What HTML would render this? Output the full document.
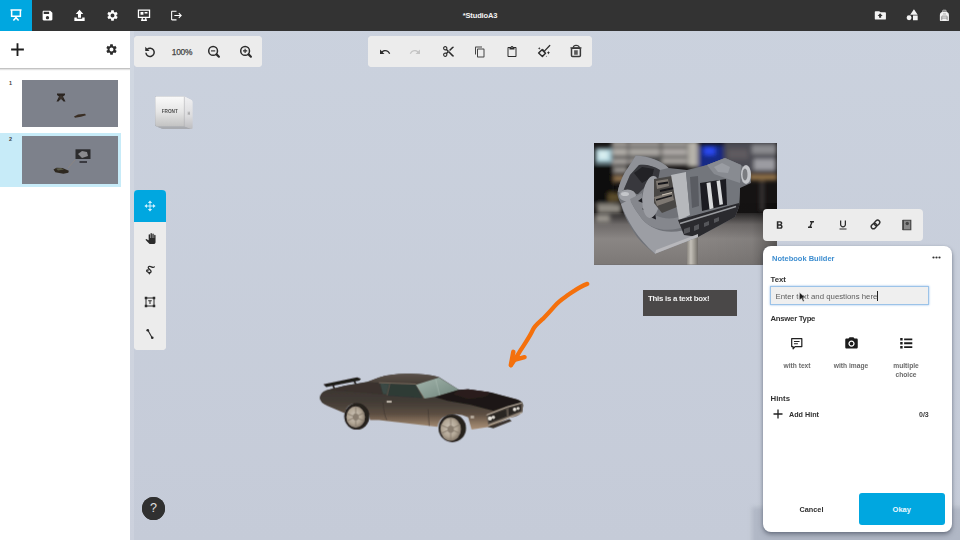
<!DOCTYPE html>
<html><head><meta charset="utf-8">
<style>
*{box-sizing:border-box;margin:0;padding:0}
html,body{width:960px;height:540px;overflow:hidden;background:#c9d0dd;font-family:"Liberation Sans",sans-serif;}
#app{position:absolute;left:0;top:0;width:960px;height:540px;background:linear-gradient(180deg,#cbd2de 0%,#c5cbd8 100%)}
#in{position:absolute;left:0;top:0;width:960px;height:540px;filter:blur(.45px)}
.bl{position:absolute}
.abs{position:absolute}
#topbar{position:absolute;left:0;top:0;width:972px;height:31px;background:#333333}
#tab{position:absolute;left:0;top:0;width:32px;height:31px;background:#00a7e0}
#title{position:absolute;left:0;width:960px;top:11px;text-align:center;color:#f4f4f4;font-size:7.500px;font-weight:bold;letter-spacing:-0.150px}
#side{position:absolute;left:0;top:31px;width:130px;height:521px;background:#fff;overflow:hidden}
#sidehead{position:absolute;left:-12px;top:0;width:154px;height:37px;background:#fff;box-shadow:0 1px 2px rgba(0,0,0,0.35)}
.thumb{position:absolute;left:22px;width:96px;height:48px;background:#7d818b}
#sel{position:absolute;left:-12px;top:102px;width:133px;height:54px;background:#c7ebf8}
.num{position:absolute;left:9px;font-size:5.500px;color:#444;font-weight:bold}
.tb{position:absolute;background:#ececec;border-radius:4px}
svg{position:absolute;overflow:visible}
.ic{position:absolute;width:12px;height:12px}
.ic svg{left:0;top:0;width:100%;height:100%}
.lbl{font-size:7.800px;font-weight:bold;color:#333;white-space:nowrap}
.sm{font-size:7.100px;font-weight:bold;color:#6a6a6a;text-align:center;line-height:8.900px;transform:scaleX(.94)}
.w{fill:#fff}
.d{fill:#2b2b2b}
</style></head><body>
<div id="app"><div id="in">
 <div class="bl" style="left:-12px;top:-12px;width:984px;height:24px;background:#333"></div>
 <div class="bl" style="left:-12px;top:-12px;width:44px;height:24px;background:#00a7e0"></div>
 <div class="bl" style="left:-12px;top:31px;width:24px;height:521px;background:#fff"></div>
 <div class="bl" style="left:-12px;top:520px;width:142px;height:32px;background:#fff"></div>
 <div class="bl" style="left:-12px;top:133px;width:24px;height:54px;background:#c7ebf8"></div>
 <div class="bl" style="left:130px;top:31px;width:4px;height:521px;background:rgba(255,255,255,.13)"></div>
<!--TOPBAR-->
 <div id="topbar"><div id="tab"></div><div id="title">*StudioA3</div>
  <!-- presentation -->
  <svg style="left:9px;top:8px;width:14px;height:14px" viewBox="0 0 24 24"><path fill="none" stroke="#fff" stroke-width="2.6" d="M2.500 3.500h19M4.500 3.500v10.500h15V3.500M12 14v3M12 16.500l-4.500 5M12 16.500l4.500 5"/></svg>
  <svg style="left:41px;top:9px;width:13px;height:13px" viewBox="0 0 24 24"><path class="w" d="M17 3H5c-1.110 0-2 .900-2 2v14c0 1.100.890 2 2 2h14c1.100 0 2-.900 2-2V7l-4-4zm-5 16c-1.660 0-3-1.340-3-3s1.340-3 3-3 3 1.340 3 3-1.340 3-3 3zm3-10H5V5h10v4z"/></svg>
  <!-- upload -->
  <svg style="left:73px;top:9px;width:13px;height:13px" viewBox="0 0 24 24"><path class="w" d="M12 1.500l-7 7.500h4.200v7h5.600V9H19zM2.500 15.500h4.500v2.500h10v-2.500h4.500v6.500h-19z"/></svg>
  <svg style="left:105.500px;top:9px;width:13px;height:13px" viewBox="0 0 24 24"><path class="w" d="M19.140 12.940c.040-.300.060-.610.060-.940 0-.320-.020-.640-.070-.940l2.030-1.580c.180-.140.230-.410.120-.610l-1.920-3.320c-.120-.220-.370-.290-.590-.220l-2.390.960c-.500-.380-1.030-.700-1.620-.940l-.360-2.540c-.040-.240-.240-.410-.480-.410h-3.840c-.240 0-.430.170-.470.410l-.360 2.540c-.590.240-1.130.570-1.620.940l-2.390-.960c-.220-.080-.470 0-.590.220L2.740 8.870c-.120.210-.080.470.120.610l2.030 1.580c-.050.300-.090.630-.090.940s.020.640.070.940l-2.030 1.580c-.180.140-.230.410-.120.610l1.920 3.320c.120.220.370.290.590.220l2.390-.960c.500.380 1.030.700 1.620.940l.360 2.540c.050.240.240.410.480.410h3.840c.240 0 .440-.170.470-.410l.360-2.540c.590-.240 1.130-.560 1.620-.940l2.390.960c.220.080.470 0 .590-.220l1.920-3.320c.120-.220.070-.470-.120-.610l-2.010-1.580zM12 15.600c-1.980 0-3.600-1.620-3.600-3.600s1.620-3.600 3.600-3.600 3.600 1.620 3.600 3.600-1.620 3.600-3.600 3.600z"/></svg>
  <!-- monitor -->
  <svg style="left:136.500px;top:8px;width:14px;height:14px" viewBox="0 0 24 24"><path fill="none" stroke="#fff" stroke-width="2.200" d="M2.500 3.500h19v12.500h-19zM7 21h10M9 16.500v4M15 16.500v4"/><path class="w" d="M6 7h5v4.500H6zM13 7h5v2.500h-5z"/></svg>
  <svg style="left:169.500px;top:9px;width:13px;height:13px" viewBox="0 0 24 24"><path class="w" d="M17 7l-1.410 1.410L18.170 11H8v2h10.170l-2.580 2.580L17 17l5-5zM4 5h8V3H4c-1.100 0-2 .900-2 2v14c0 1.100.900 2 2 2h8v-2H4V5z"/></svg>
  <!-- right -->
  <svg style="left:865px;top:3px;width:90px;height:25px" viewBox="0 0 960 267">
   <path fill="#f4f4f4" d="M104 96Q104 87 113 87H150L166 100H214Q223 100 223 109V167Q223 176 214 176H113Q104 176 104 167Z"/>
   <path fill="#333" d="M161 110l27 28h-16v20h-22v-20h-16z"/>
   <path fill="#f4f4f4" d="M522 68l40 58h-80zM512 134h50v50h-50z"/><circle cx="470" cy="158" r="26" fill="#f4f4f4"/>
   <path fill="#f0f0f0" d="M799 184V128Q799 94 847 92Q896 94 896 128V184Q896 191 889 191H806Q799 191 799 184Z"/>
   <path fill="none" stroke="#f0f0f0" stroke-width="8" d="M829 94V84Q829 77 837 77H858Q866 77 866 84V94"/>
   <path fill="none" stroke="#555" stroke-width="6" d="M819 184V146Q819 140 825 140H871Q877 140 877 146V184M819 161H877"/>
   <path stroke="#777" stroke-width="6" d="M832 117H864"/>
  </svg>
 </div>
<!--SIDEBAR-->
 <div id="side">
   <div id="sel"></div>
   <div class="thumb" style="top:48.500px;left:21.500px;height:47.500px"></div>
   <div class="thumb" style="top:104.500px;left:21.500px;height:48.500px"></div>
   <svg style="left:0;top:0;width:130px;height:200px;filter:blur(.5px)" viewBox="0 31 130 200">
    <path d="M57 93.500h8v1.500l-2 1.500 2.500 5h-2l-2.500-3-2.500 3h-2l2.500-5-2-1.500z" fill="#2a2420"/><circle cx="61" cy="97.500" r="2" fill="#3a322c"/>
    <path d="M74 116.500l4-2 7-.8 1 1.500-5 1.500-6 1z" fill="#3a2e24"/>
    <rect x="75.500" y="149.300" width="15" height="9.700" fill="#2c2c2e"/><path d="M78 154l4-3 5 1 1 4-6 2z" fill="#8a8a8e"/>
    <rect x="79.500" y="161" width="7.500" height="2" fill="#3a3a40"/>
    <path d="M75 160l-7 8" stroke="#9a8878" stroke-width=".5"/>
    <path d="M53.500 169.500l3-1.800 6 .2 6.300 2.800-.5 2-5 1-8-1.500z" fill="#2e2820"/><path d="M56 168.500l5-.5 3 1.500-6 1z" fill="#5a5a48"/>
   </svg>
   <div class="num" style="top:49px">1</div>
   <div class="num" style="top:105px">2</div>
   <div id="sidehead">
    <svg style="left:21px;top:9.500px;width:17px;height:17px" viewBox="0 0 24 24"><path fill="#1e1e1e" d="M21 13.300h-7.700V21h-2.600v-7.700H3v-2.600h7.700V3h2.600v7.700H21z"/></svg>
    <svg style="left:117px;top:11.500px;width:13px;height:13px" viewBox="0 0 24 24"><path fill="#2b2b2b" d="M19.140 12.940c.040-.300.060-.610.060-.940 0-.320-.020-.640-.070-.940l2.030-1.580c.180-.140.230-.410.120-.610l-1.920-3.320c-.120-.220-.370-.290-.590-.220l-2.390.960c-.500-.380-1.030-.700-1.620-.940l-.360-2.540c-.040-.240-.240-.410-.480-.410h-3.840c-.240 0-.430.170-.470.410l-.360 2.540c-.590.240-1.130.570-1.620.940l-2.390-.960c-.220-.080-.470 0-.590.220L2.740 8.870c-.120.210-.080.470.120.610l2.030 1.580c-.050.300-.090.630-.090.940s.020.640.070.940l-2.030 1.580c-.180.140-.230.410-.120.610l1.920 3.320c.120.220.370.290.590.220l2.390-.960c.500.380 1.030.700 1.620.940l.360 2.540c.050.240.240.410.480.410h3.840c.240 0 .440-.170.470-.410l.360-2.540c.590-.240 1.130-.560 1.620-.940l2.390.960c.220.080.470 0 .590-.220l1.920-3.320c.120-.220.070-.470-.120-.610l-2.010-1.580zM12 15.600c-1.980 0-3.600-1.620-3.600-3.600s1.620-3.600 3.600-3.600 3.600 1.620 3.600 3.600-1.620 3.600-3.600 3.600z"/></svg>
   </div>
 </div>
<!--ZOOMTB-->
 <div class="tb" id="zoomtb" style="left:134px;top:35.500px;width:128px;height:31.500px">
  <svg style="left:10px;top:10.200px;width:12px;height:12px" viewBox="0 0 24 24"><path fill="none" stroke="#2b2b2b" stroke-width="2.900" d="M6.200 6.800A8.300 8.300 0 1 1 3.800 13.500"/><path class="d" d="M2.500 1.500v8.500h8.500z"/></svg>
  <div class="abs" style="left:28px;top:11.400px;width:40px;text-align:center;font-size:8.400px;color:#444;letter-spacing:-0.200px;-webkit-text-stroke:.250px #444">100%</div>
  <svg style="left:71px;top:7px;width:17px;height:17px" viewBox="0 0 17 17"><g fill="none" stroke="#2b2b2b" stroke-linecap="round"><circle cx="8.100" cy="7.900" r="4.400" stroke-width="1.500"/><path stroke-width="2.200" d="M11.600 11.400l2.300 2.300"/><path stroke-width="1.100" stroke-linecap="butt" d="M6 7.900h4.200"/></g></svg>
  <svg style="left:102.650px;top:7px;width:17px;height:17px" viewBox="0 0 17 17"><g fill="none" stroke="#2b2b2b" stroke-linecap="round"><circle cx="8.100" cy="7.900" r="4.400" stroke-width="1.500"/><path stroke-width="2.200" d="M11.600 11.400l2.300 2.300"/><path stroke-width="1.100" stroke-linecap="butt" d="M6 7.900h4.200M8.100 5.800v4.200"/></g></svg>
 </div>
<!--EDITTB-->
 <div class="tb" id="edittb" style="left:368px;top:35.500px;width:224px;height:31.500px">
  <svg style="left:11px;top:10.500px;width:12px;height:12px" viewBox="0 0 24 24"><path class="d" d="M12.500 8c-2.650 0-5.050.990-6.900 2.600L2 7v9h9l-3.620-3.620c1.390-1.160 3.160-1.880 5.120-1.880 3.540 0 6.550 2.310 7.600 5.500l2.370-.780C21.080 11.030 17.150 8 12.500 8z"/></svg>
  <svg style="left:41px;top:10.500px;width:12px;height:12px" viewBox="0 0 24 24"><path fill="#c4c4c4" d="M18.400 10.600C16.550 8.990 14.150 8 11.500 8c-4.650 0-8.580 3.030-9.960 7.220L3.900 16c1.050-3.190 4.050-5.500 7.600-5.500 1.950 0 3.730.720 5.120 1.880L13 16h9V7l-3.600 3.600z"/></svg>
  <svg style="left:73.500px;top:9px;width:13px;height:13px" viewBox="0 0 24 24"><path class="d" d="M9.640 7.640c.230-.500.360-1.050.360-1.640 0-2.210-1.790-4-4-4S2 3.790 2 6s1.790 4 4 4c.590 0 1.140-.130 1.640-.360L10 12l-2.360 2.360C7.140 14.130 6.590 14 6 14c-2.210 0-4 1.790-4 4s1.790 4 4 4 4-1.790 4-4c0-.590-.130-1.140-.360-1.640L12 14l7 7h3v-1L9.640 7.640zM6 8c-1.100 0-2-.890-2-2s.900-2 2-2 2 .890 2 2-.900 2-2 2zm0 12c-1.100 0-2-.890-2-2s.900-2 2-2 2 .890 2 2-.900 2-2 2zm6-7.500c-.280 0-.500-.220-.500-.500s.220-.500.500-.500.500.220.500.500-.220.500-.500.500zM19 3l-6 6 2 2 7-7V3z"/></svg>
  <svg style="left:106px;top:10px;width:12px;height:12px" viewBox="0 0 24 24"><path fill="#444" d="M16 1H4c-1.100 0-2 .900-2 2v14h2V3h12V1zm3 4H8c-1.100 0-2 .900-2 2v14c0 1.100.900 2 2 2h11c1.100 0 2-.900 2-2V7c0-1.100-.900-2-2-2zm0 16H8V7h11v14z"/></svg>
  <svg style="left:138px;top:10px;width:12px;height:12px" viewBox="0 0 24 24"><path class="d" d="M19 2h-4.180C14.400.840 13.300 0 12 0c-1.300 0-2.400.840-2.820 2H5c-1.100 0-2 .900-2 2v16c0 1.100.900 2 2 2h14c1.100 0 2-.900 2-2V4c0-1.100-.900-2-2-2zm-7 0c.550 0 1 .450 1 1s-.450 1-1 1-1-.450-1-1 .450-1 1-1zm7 18H5V4h2v3h10V4h2v16z"/></svg>
  <!-- broom -->
  <svg style="left:162px;top:2.500px;width:60px;height:27px" viewBox="0 0 960 432"><g fill="none" stroke="#2e2e2e" stroke-linecap="round" stroke-linejoin="round"><path stroke-width="20" d="M316 120L238 203"/><path stroke-width="24" d="M192 188l56 56-50 52-60-56z"/><path stroke-width="18" d="M236 214l-34-32"/></g><path fill="#2e2e2e" d="M148 143l7 15 15 7-15 7-7 15-7-15-15-7 15-7zM295 208l9 18 18 9-18 9-9 18-9-18-18-9 18-9z"/><circle cx="262" cy="291" r="8" fill="#555"/>
  <g fill="none" stroke="#3a3a3a" stroke-linecap="round" stroke-linejoin="round"><rect x="664" y="162" width="142" height="134" rx="16" stroke-width="24"/><path stroke-width="22" d="M654 158h162"/><path stroke-width="20" d="M694 148q2-32 42-32q46 0 52 32"/></g><rect x="706" y="196" width="58" height="72" fill="#5a5a5a"/></svg>
 </div>
<!--TOOLTB-->
 <div class="tb" id="tooltb" style="left:134px;top:189.500px;width:32px;height:160.500px">
  <div class="abs" style="left:0;top:0;width:32px;height:32px;background:#00a7e0;border-radius:4px 4px 0 0"></div>
  <svg style="left:10px;top:10.300px;width:12px;height:12px" viewBox="0 0 24 24"><path stroke="#d4f2ff" stroke-width="2" fill="none" d="M12 4v16M4 12h16"/><path fill="#d4f2ff" d="M12 .8l4.200 5.200h-8.400zM12 23.200l4.200-5.200h-8.400zM.8 12l5.200-4.200v8.400zM23.200 12l-5.200-4.200v8.400z"/></svg>
  <svg style="left:10.500px;top:43px;width:11px;height:11px" viewBox="0 0 24 24"><path class="d" d="M23 5.500V20c0 2.200-1.800 4-4 4h-7.300c-1.080 0-2.100-.430-2.850-1.190L1 14.830s1.260-1.230 1.300-1.250c.220-.190.490-.290.790-.290.220 0 .420.060.600.160.040.010 4.310 2.460 4.310 2.460V4c0-.830.670-1.500 1.500-1.500S11 3.170 11 4v7h1V1.500c0-.830.670-1.500 1.500-1.500S15 .670 15 1.500V11h1V2.500c0-.830.670-1.500 1.500-1.500s1.500.670 1.500 1.500V11h1V5.500c0-.830.670-1.500 1.500-1.500s1.500.670 1.500 1.500z"/></svg>
  <svg style="left:6px;top:70.500px;width:20px;height:20px" viewBox="0 0 540 540"><path fill="none" stroke="#2b2b2b" stroke-width="35" stroke-linecap="round" stroke-linejoin="round" d="M385 185C360 215 330 195 290 178C250 162 212 175 225 215C236 250 300 270 300 310C300 348 230 345 197 320C160 292 185 262 222 272"/><path fill="#2b2b2b" d="M205 330l50 65 50-70z"/></svg>
  <!-- text box -->
  <svg style="left:10px;top:106px;width:12px;height:12px" viewBox="0 0 24 24"><path fill="none" stroke="#2b2b2b" stroke-width="2" d="M4 4h16v16H4z"/><path class="d" d="M1.500 1.500h5v5h-5zM17.500 1.500h5v5h-5zM1.500 17.500h5v5h-5zM17.500 17.500h5v5h-5zM8.500 8.500h7v2h-2.500v5.500h-2v-5.500H8.500z"/></svg>
  <svg style="left:10px;top:138.500px;width:12px;height:12px" viewBox="0 0 24 24"><path fill="none" stroke="#2b2b2b" stroke-width="2.200" d="M8 5l8 14"/><circle class="d" cx="7.500" cy="4.500" r="2.700"/><circle class="d" cx="16.500" cy="19.500" r="2.700"/></svg>
 </div>
<!--HELP-->
 <div class="abs" style="left:142px;top:497px;width:23px;height:23px;border-radius:50%;background:#303030;color:#e0e0e0;font-size:12.500px;font-weight:normal;text-align:center;line-height:23.500px">?</div>
<!--SCENE-->
<!-- cube -->
 <svg style="left:145px;top:85px;width:60px;height:55px" viewBox="0 0 589 540">
  <defs>
   <linearGradient id="cf" x1="0" y1="0" x2="0" y2="1"><stop offset="0" stop-color="#fafafa"/><stop offset=".5" stop-color="#e6e6e6"/><stop offset="1" stop-color="#c2c2c2"/></linearGradient>
   <linearGradient id="cs" x1="0" y1="0" x2="0" y2="1"><stop offset="0" stop-color="#f0f0f2"/><stop offset=".6" stop-color="#dcdcde"/><stop offset="1" stop-color="#bdbdc0"/></linearGradient>
   <filter id="b1"><feGaussianBlur stdDeviation="4"/></filter>
  </defs>
  <path d="M100 118Q100 110 110 110H385V402L180 432Q150 425 100 400Z" fill="#aeb2ba" filter="url(#b1)"/>
  <path d="M102 122Q102 112 112 112H386V408H135Q102 408 102 380Z" fill="url(#cf)"/>
  <path d="M386 112L455 148Q466 155 466 168V420Q466 432 452 432L386 408Z" fill="url(#cs)"/>
  <path d="M120 408L180 432H452L386 408Z" fill="#a9abb0"/>
  <path d="M386 114V408" stroke="#a8a8ac" stroke-width="4"/>
  <text x="243" y="274" font-family="Liberation Sans, sans-serif" font-weight="bold" font-size="52" fill="#4c4c4c" text-anchor="middle" textLength="158" lengthAdjust="spacingAndGlyphs">FRONT</text>
  <path d="M424 262v32M436 262v32M424 278h12" stroke="#888" stroke-width="6" fill="none" opacity=".8"/>
 </svg>
<!-- photo -->
 <svg id="photo" style="left:594px;top:143px;width:183px;height:121.500px" viewBox="0 0 183 121.500">
  <defs>
   <linearGradient id="pfl" x1="0" y1="0" x2="0" y2="1"><stop offset="0" stop-color="#2a2828"/><stop offset=".22" stop-color="#6e6a69"/><stop offset=".5" stop-color="#8a8684"/><stop offset="1" stop-color="#7c7876"/></linearGradient>
   <linearGradient id="pfr" x1="0" y1="0" x2="1" y2="0"><stop offset="0" stop-color="#000" stop-opacity="0"/><stop offset=".7" stop-color="#000" stop-opacity=".05"/><stop offset="1" stop-color="#000" stop-opacity=".35"/></linearGradient>
   <filter id="pb" x="-10%" y="-10%" width="120%" height="120%"><feGaussianBlur stdDeviation="1.900"/></filter>
   <filter id="pb2" x="-10%" y="-10%" width="120%" height="120%"><feGaussianBlur stdDeviation=".700"/></filter>
   <filter id="pb3" x="-10%" y="-10%" width="120%" height="120%"><feGaussianBlur stdDeviation="1.100"/></filter>
   <linearGradient id="pst" x1="0" y1="0" x2="1" y2="0"><stop offset="0" stop-color="#8a8680"/><stop offset=".35" stop-color="#c4c0b8"/><stop offset=".7" stop-color="#9a968e"/><stop offset="1" stop-color="#6e6a66"/></linearGradient>
   <clipPath id="pc"><rect x="0" y="0" width="183" height="121.500"/></clipPath>
  </defs>
  <g clip-path="url(#pc)">
  <rect width="183" height="121.500" fill="#151313"/>
  <rect x="0" y="70" width="183" height="52" fill="url(#pfl)"/>
  <rect x="100" y="60" width="83" height="62" fill="url(#pfr)"/>
  <g filter="url(#pb)">
   <!-- monitor -->
  <svg style="left:136.500px;top:8px;width:14px;height:14px" viewBox="0 0 24 24"><path fill="none" stroke="#fff" stroke-width="2.200" d="M2.500 3.500h19v12.500h-19zM7 21h10M9 16.500v4M15 16.500v4"/><path class="w" d="M6 7h5v4.500H6zM13 7h5v2.500h-5z"/></svg>
  <svg style="left:169.500px;top:9px;width:13px;height:13px" viewBox="0 0 24 24"><path class="w" d="M17 7l-1.410 1.410L18.170 11H8v2h10.170l-2.580 2.580L17 17l5-5zM4 5h8V3H4c-1.100 0-2 .900-2 2v14c0 1.100.900 2 2 2h8v-2H4V5z"/></svg>
  <!-- right -->
  <svg style="left:865px;top:3px;width:90px;height:25px" viewBox="0 0 960 267">
   <path fill="#f4f4f4" d="M104 96Q104 87 113 87H150L166 100H214Q223 100 223 109V167Q223 176 214 176H113Q104 176 104 167Z"/>
   <path fill="#333" d="M161 110l27 28h-16v20h-22v-20h-16z"/>
   <path fill="#f4f4f4" d="M522 68l40 58h-80zM512 134h50v50h-50z"/><circle cx="470" cy="158" r="26" fill="#f4f4f4"/>
   <path fill="#f0f0f0" d="M799 184V128Q799 94 847 92Q896 94 896 128V184Q896 191 889 191H806Q799 191 799 184Z"/>
   <path fill="none" stroke="#f0f0f0" stroke-width="8" d="M829 94V84Q829 77 837 77H858Q866 77 866 84V94"/>
   <path fill="none" stroke="#555" stroke-width="6" d="M819 184V146Q819 140 825 140H871Q877 140 877 146V184M819 161H877"/>
   <path stroke="#777" stroke-width="6" d="M832 117H864"/>
  </svg>
 </div>
<!--SIDEBAR-->
 <div id="side">
   <div id="sel"></div>
   <div class="thumb" style="top:48.500px;left:21.500px;height:47.500px"></div>
   <div class="thumb" style="top:104.500px;left:21.500px;height:48.500px"></div>
   <svg style="left:0;top:0;width:130px;height:200px;filter:blur(.5px)" viewBox="0 31 130 200">
    <path d="M57 93.500h8v1.500l-2 1.500 2.500 5h-2l-2.500-3-2.500 3h-2l2.500-5-2-1.500z" fill="#2a2420"/><circle cx="61" cy="97.500" r="2" fill="#3a322c"/>
    <path d="M74 116.500l4-2 7-.8 1 1.500-5 1.500-6 1z" fill="#3a2e24"/>
    <rect x="75.500" y="149.300" width="15" height="9.700" fill="#2c2c2e"/><path d="M78 154l4-3 5 1 1 4-6 2z" fill="#8a8a8e"/>
    <rect x="79.500" y="161" width="7.500" height="2" fill="#3a3a40"/>
    <path d="M75 160l-7 8" stroke="#9a8878" stroke-width=".5"/>
    <path d="M53.500 169.500l3-1.800 6 .2 6.300 2.800-.5 2-5 1-8-1.500z" fill="#2e2820"/><path d="M56 168.500l5-.5 3 1.500-6 1z" fill="#5a5a48"/>
   </svg>
   <div class="num" style="top:49px">1</div>
   <div class="num" style="top:105px">2</div>
   <div id="sidehead">
    <svg style="left:21px;top:9.500px;width:17px;height:17px" viewBox="0 0 24 24"><path fill="#1e1e1e" d="M21 13.300h-7.700V21h-2.600v-7.700H3v-2.600h7.700V3h2.600v7.700H21z"/></svg>
    <svg style="left:117px;top:11.500px;width:13px;height:13px" viewBox="0 0 24 24"><path fill="#2b2b2b" d="M19.140 12.940c.040-.300.060-.610.060-.940 0-.320-.020-.640-.070-.940l2.030-1.580c.180-.140.230-.410.120-.610l-1.920-3.320c-.120-.220-.370-.290-.590-.220l-2.390.960c-.500-.380-1.030-.700-1.620-.940l-.360-2.540c-.040-.240-.240-.410-.480-.410h-3.840c-.240 0-.430.170-.470.410l-.360 2.540c-.590.240-1.130.570-1.620.940l-2.390-.960c-.220-.080-.470 0-.590.220L2.740 8.870c-.120.210-.080.470.120.610l2.030 1.580c-.050.300-.090.630-.090.940s.020.640.070.940l-2.030 1.580c-.180.140-.230.410-.120.610l1.920 3.320c.120.220.370.290.590.220l2.390-.960c.500.380 1.030.700 1.620.940l.360 2.540c.050.240.240.410.480.410h3.840c.240 0 .440-.170.470-.410l.360-2.540c.590-.240 1.130-.560 1.620-.940l2.390.960c.220.080.470 0 .590-.220l1.920-3.320c.120-.220.070-.470-.120-.610l-2.010-1.580zM12 15.600c-1.980 0-3.600-1.620-3.600-3.600s1.620-3.600 3.600-3.600 3.600 1.620 3.600 3.600-1.620 3.600-3.600 3.600z"/></svg>
   </div>
 </div>
<!--ZOOMTB-->
 <div class="tb" id="zoomtb" style="left:134px;top:35.500px;width:128px;height:31.500px">
  <svg style="left:10px;top:10.200px;width:12px;height:12px" viewBox="0 0 24 24"><path fill="none" stroke="#2b2b2b" stroke-width="2.900" d="M6.200 6.800A8.300 8.300 0 1 1 3.800 13.500"/><path class="d" d="M2.500 1.500v8.500h8.500z"/></svg>
  <div class="abs" style="left:28px;top:11.400px;width:40px;text-align:center;font-size:8.400px;color:#444;letter-spacing:-0.200px;-webkit-text-stroke:.250px #444">100%</div>
  <svg style="left:71px;top:7px;width:17px;height:17px" viewBox="0 0 17 17"><g fill="none" stroke="#2b2b2b" stroke-linecap="round"><circle cx="8.100" cy="7.900" r="4.400" stroke-width="1.500"/><path stroke-width="2.200" d="M11.600 11.400l2.300 2.300"/><path stroke-width="1.100" stroke-linecap="butt" d="M6 7.900h4.200"/></g></svg>
  <svg style="left:102.650px;top:7px;width:17px;height:17px" viewBox="0 0 17 17"><g fill="none" stroke="#2b2b2b" stroke-linecap="round"><circle cx="8.100" cy="7.900" r="4.400" stroke-width="1.500"/><path stroke-width="2.200" d="M11.600 11.400l2.300 2.300"/><path stroke-width="1.100" stroke-linecap="butt" d="M6 7.900h4.200M8.100 5.800v4.200"/></g></svg>
 </div>
<!--EDITTB-->
 <div class="tb" id="edittb" style="left:368px;top:35.500px;width:224px;height:31.500px">
  <svg style="left:11px;top:10.500px;width:12px;height:12px" viewBox="0 0 24 24"><path class="d" d="M12.500 8c-2.650 0-5.050.990-6.900 2.600L2 7v9h9l-3.620-3.620c1.390-1.160 3.160-1.880 5.120-1.880 3.540 0 6.550 2.310 7.600 5.500l2.370-.780C21.080 11.030 17.150 8 12.500 8z"/></svg>
  <svg style="left:41px;top:10.500px;width:12px;height:12px" viewBox="0 0 24 24"><path fill="#c4c4c4" d="M18.400 10.600C16.550 8.990 14.150 8 11.500 8c-4.650 0-8.580 3.030-9.960 7.220L3.900 16c1.050-3.190 4.050-5.500 7.600-5.500 1.950 0 3.730.720 5.120 1.880L13 16h9V7l-3.600 3.600z"/></svg>
  <svg style="left:73.500px;top:9px;width:13px;height:13px" viewBox="0 0 24 24"><path class="d" d="M9.640 7.640c.230-.500.360-1.050.360-1.640 0-2.210-1.790-4-4-4S2 3.790 2 6s1.790 4 4 4c.590 0 1.140-.130 1.640-.360L10 12l-2.360 2.360C7.140 14.130 6.590 14 6 14c-2.210 0-4 1.790-4 4s1.790 4 4 4 4-1.790 4-4c0-.590-.130-1.140-.360-1.640L12 14l7 7h3v-1L9.640 7.640zM6 8c-1.100 0-2-.890-2-2s.900-2 2-2 2 .890 2 2-.900 2-2 2zm0 12c-1.100 0-2-.890-2-2s.900-2 2-2 2 .890 2 2-.900 2-2 2zm6-7.500c-.280 0-.500-.220-.500-.500s.220-.500.500-.500.500.220.500.500-.220.500-.500.500zM19 3l-6 6 2 2 7-7V3z"/></svg>
  <svg style="left:106px;top:10px;width:12px;height:12px" viewBox="0 0 24 24"><path fill="#444" d="M16 1H4c-1.100 0-2 .900-2 2v14h2V3h12V1zm3 4H8c-1.100 0-2 .900-2 2v14c0 1.100.900 2 2 2h11c1.100 0 2-.900 2-2V7c0-1.100-.900-2-2-2zm0 16H8V7h11v14z"/></svg>
  <svg style="left:138px;top:10px;width:12px;height:12px" viewBox="0 0 24 24"><path class="d" d="M19 2h-4.180C14.400.840 13.300 0 12 0c-1.300 0-2.400.840-2.820 2H5c-1.100 0-2 .900-2 2v16c0 1.100.900 2 2 2h14c1.100 0 2-.900 2-2V4c0-1.100-.900-2-2-2zm-7 0c.550 0 1 .450 1 1s-.450 1-1 1-1-.450-1-1 .450-1 1-1zm7 18H5V4h2v3h10V4h2v16z"/></svg>
  <!-- broom -->
  <svg style="left:162px;top:2.500px;width:60px;height:27px" viewBox="0 0 960 432"><g fill="none" stroke="#2e2e2e" stroke-linecap="round" stroke-linejoin="round"><path stroke-width="20" d="M316 120L238 203"/><path stroke-width="24" d="M192 188l56 56-50 52-60-56z"/><path stroke-width="18" d="M236 214l-34-32"/></g><path fill="#2e2e2e" d="M148 143l7 15 15 7-15 7-7 15-7-15-15-7 15-7zM295 208l9 18 18 9-18 9-9 18-9-18-18-9 18-9z"/><circle cx="262" cy="291" r="8" fill="#555"/>
  <g fill="none" stroke="#3a3a3a" stroke-linecap="round" stroke-linejoin="round"><rect x="664" y="162" width="142" height="134" rx="16" stroke-width="24"/><path stroke-width="22" d="M654 158h162"/><path stroke-width="20" d="M694 148q2-32 42-32q46 0 52 32"/></g><rect x="706" y="196" width="58" height="72" fill="#5a5a5a"/></svg>
 </div>
<!--TOOLTB-->
 <div class="tb" id="tooltb" style="left:134px;top:189.500px;width:32px;height:160.500px">
  <div class="abs" style="left:0;top:0;width:32px;height:32px;background:#00a7e0;border-radius:4px 4px 0 0"></div>
  <svg style="left:10px;top:10.300px;width:12px;height:12px" viewBox="0 0 24 24"><path stroke="#d4f2ff" stroke-width="2" fill="none" d="M12 4v16M4 12h16"/><path fill="#d4f2ff" d="M12 .8l4.200 5.200h-8.400zM12 23.200l4.200-5.200h-8.400zM.8 12l5.200-4.200v8.400zM23.200 12l-5.200-4.200v8.400z"/></svg>
  <svg style="left:10.500px;top:43px;width:11px;height:11px" viewBox="0 0 24 24"><path class="d" d="M23 5.500V20c0 2.200-1.800 4-4 4h-7.300c-1.080 0-2.100-.430-2.850-1.190L1 14.830s1.260-1.230 1.300-1.250c.220-.190.490-.290.790-.290.220 0 .420.060.600.160.040.010 4.310 2.460 4.310 2.460V4c0-.830.670-1.500 1.500-1.500S11 3.170 11 4v7h1V1.500c0-.830.670-1.500 1.500-1.500S15 .670 15 1.500V11h1V2.500c0-.830.670-1.500 1.500-1.500s1.500.670 1.500 1.500V11h1V5.500c0-.830.670-1.500 1.500-1.500s1.500.670 1.500 1.500z"/></svg>
  <svg style="left:6px;top:70.500px;width:20px;height:20px" viewBox="0 0 540 540"><path fill="none" stroke="#2b2b2b" stroke-width="35" stroke-linecap="round" stroke-linejoin="round" d="M385 185C360 215 330 195 290 178C250 162 212 175 225 215C236 250 300 270 300 310C300 348 230 345 197 320C160 292 185 262 222 272"/><path fill="#2b2b2b" d="M205 330l50 65 50-70z"/></svg>
  <!-- text box -->
  <svg style="left:10px;top:106px;width:12px;height:12px" viewBox="0 0 24 24"><path fill="none" stroke="#2b2b2b" stroke-width="2" d="M4 4h16v16H4z"/><path class="d" d="M1.500 1.500h5v5h-5zM17.500 1.500h5v5h-5zM1.500 17.500h5v5h-5zM17.500 17.500h5v5h-5zM8.500 8.500h7v2h-2.500v5.500h-2v-5.500H8.500z"/></svg>
  <svg style="left:10px;top:138.500px;width:12px;height:12px" viewBox="0 0 24 24"><path fill="none" stroke="#2b2b2b" stroke-width="2.200" d="M8 5l8 14"/><circle class="d" cx="7.500" cy="4.500" r="2.700"/><circle class="d" cx="16.500" cy="19.500" r="2.700"/></svg>
 </div>
<!--HELP-->
 <div class="abs" style="left:142px;top:497px;width:23px;height:23px;border-radius:50%;background:#303030;color:#e0e0e0;font-size:12.500px;font-weight:normal;text-align:center;line-height:23.500px">?</div>
<!--SCENE-->
<!-- cube -->
 <svg style="left:145px;top:85px;width:60px;height:55px" viewBox="0 0 589 540">
  <defs>
   <linearGradient id="cf" x1="0" y1="0" x2="0" y2="1"><stop offset="0" stop-color="#fafafa"/><stop offset=".5" stop-color="#e6e6e6"/><stop offset="1" stop-color="#c2c2c2"/></linearGradient>
   <linearGradient id="cs" x1="0" y1="0" x2="0" y2="1"><stop offset="0" stop-color="#f0f0f2"/><stop offset=".6" stop-color="#dcdcde"/><stop offset="1" stop-color="#bdbdc0"/></linearGradient>
   <filter id="b1"><feGaussianBlur stdDeviation="4"/></filter>
  </defs>
  <path d="M100 118Q100 110 110 110H385V402L180 432Q150 425 100 400Z" fill="#aeb2ba" filter="url(#b1)"/>
  <path d="M102 122Q102 112 112 112H386V408H135Q102 408 102 380Z" fill="url(#cf)"/>
  <path d="M386 112L455 148Q466 155 466 168V420Q466 432 452 432L386 408Z" fill="url(#cs)"/>
  <path d="M120 408L180 432H452L386 408Z" fill="#a9abb0"/>
  <path d="M386 114V408" stroke="#a8a8ac" stroke-width="4"/>
  <text x="243" y="274" font-family="Liberation Sans, sans-serif" font-weight="bold" font-size="52" fill="#4c4c4c" text-anchor="middle" textLength="158" lengthAdjust="spacingAndGlyphs">FRONT</text>
  <path d="M424 262v32M436 262v32M424 278h12" stroke="#888" stroke-width="6" fill="none" opacity=".8"/>
 </svg>
<!-- photo -->
 <svg id="photo" style="left:594px;top:143px;width:183px;height:121.500px" viewBox="0 0 183 121.500">
  <defs>
   <linearGradient id="pfl" x1="0" y1="0" x2="0" y2="1"><stop offset="0" stop-color="#2a2828"/><stop offset=".22" stop-color="#6e6a69"/><stop offset=".5" stop-color="#8a8684"/><stop offset="1" stop-color="#7c7876"/></linearGradient>
   <linearGradient id="pfr" x1="0" y1="0" x2="1" y2="0"><stop offset="0" stop-color="#000" stop-opacity="0"/><stop offset=".7" stop-color="#000" stop-opacity=".05"/><stop offset="1" stop-color="#000" stop-opacity=".35"/></linearGradient>
   <filter id="pb" x="-10%" y="-10%" width="120%" height="120%"><feGaussianBlur stdDeviation="1.900"/></filter>
   <filter id="pb2" x="-10%" y="-10%" width="120%" height="120%"><feGaussianBlur stdDeviation=".700"/></filter>
   <filter id="pb3" x="-10%" y="-10%" width="120%" height="120%"><feGaussianBlur stdDeviation="1.100"/></filter>
   <linearGradient id="pst" x1="0" y1="0" x2="1" y2="0"><stop offset="0" stop-color="#8a8680"/><stop offset=".35" stop-color="#c4c0b8"/><stop offset=".7" stop-color="#9a968e"/><stop offset="1" stop-color="#6e6a66"/></linearGradient>
   <clipPath id="pc"><rect x="0" y="0" width="183" height="121.500"/></clipPath>
  </defs>
  <g clip-path="url(#pc)">
  <rect width="183" height="121.500" fill="#151313"/>
  <rect x="0" y="70" width="183" height="52" fill="url(#pfl)"/>
  <rect x="100" y="60" width="83" height="62" fill="url(#pfr)"/>
  <g filter="url(#pb)">
   <!-- shelves -->
   <rect x="17" y="-2" width="80" height="24" fill="#4a4848"/>
   <rect x="18.500" y="-2" width="15" height="5" fill="#aaa6a0"/><rect x="18.500" y="5.600" width="15" height="6.800" fill="#b4b0aa"/><rect x="18.500" y="16" width="15" height="6" fill="#a8a4a0"/><rect x="18.500" y="24" width="15" height="6" fill="#a09c98"/><rect x="17" y="32.500" width="14" height="6" fill="#9a7a52"/>
   <rect x="35" y="-2" width="31" height="5" fill="#a4a09c"/><rect x="35" y="5.600" width="31" height="6.800" fill="#aeaaa6"/><rect x="35" y="16" width="10" height="6" fill="#9c9894"/>
   <rect x="68" y="-2" width="25" height="5" fill="#a8a4a0"/><rect x="68" y="5.600" width="25" height="6.800" fill="#b0aca8"/><rect x="68" y="15" width="25" height="7" fill="#a4a09c"/>
   <rect x="94" y="-2" width="10" height="26" fill="#b6b2aa"/>
   <!-- monitor -->
   <rect x="1.500" y="5.500" width="16" height="14.500" fill="#a8d0dc"/><rect x="4" y="7.500" width="10" height="9" fill="#d8eef0"/>
   <!-- blue cabinet -->
   <rect x="104.500" y="2" width="25" height="25" fill="#162c86"/><rect x="110" y="4" width="11" height="8" fill="#2a48f0"/>
   <!-- right shelves -->
   <rect x="130" y="-2" width="53" height="32" fill="#4c4c52"/>
   <rect x="158" y="2" width="24" height="9" fill="#8a8a8e"/><rect x="160" y="16" width="21" height="11" fill="#9c9ca2"/><rect x="134" y="6" width="20" height="10" fill="#5e5a5e"/>
   <rect x="155" y="31.500" width="28" height="5.500" fill="#9c7a4e"/>
   <rect x="166" y="38" width="4" height="30" fill="#3a3634"/>
   <!-- mid left -->
   <rect x="-2" y="22" width="22" height="40" fill="#0a0808"/>
   <rect x="3" y="61" width="24" height="9" fill="#8e8a82"/><rect x="2" y="72" width="14" height="7" fill="#9a968e"/>
   <rect x="14" y="50" width="12" height="9" fill="#5a4c2c"/>
  </g>
  <!-- stand -->
  <rect x="93" y="94" width="11" height="30" fill="url(#pst)" filter="url(#pb2)"/>
  <!-- transmission -->
  <g filter="url(#pb2)">
   <path d="M41.800 12.400C55 13 68 18 74.600 25L93 27L113 22L131 15L147 22L157 30L157 40L146 45L145 64L141 74L104 94L61 110.700C50 102 44 96 40.700 90.400C33 78 29 70 27 61C24 55 23 52 23.700 48.600C26 38 30 30 33.900 24.900Z" fill="#6f7278"/>
   <path d="M41.800 12.400C55 13 68 18 74.600 25L66 27C58 22 50 21 45 22L36 32L30 46L26 50L23.700 48.600C26 38 30 30 33.900 24.900Z" fill="#8f9197"/>
   <path d="M36 32L45 22C52 21 60 23 66 27L64 37L52 43L44 51L32 50L30 46Z" fill="#37383c"/>
   <path d="M40 30l8-6 12 2-2 8-10 6z" fill="#222226"/>
   <ellipse cx="33.500" cy="52.500" rx="8.500" ry="6" fill="#9d9fa5"/>
   <ellipse cx="31" cy="51" rx="4" ry="2" fill="#c4c6ca"/>
   <path d="M27 61C33 78 44 96 61 110.700L104 94L100 84C80 92 60 90 48 76C42 68 38 62 36 56Z" fill="#9c9ea4"/>
   <path d="M36 56C38 62 42 68 48 76C58 88 76 90 96 82L92 72C76 78 62 76 54 66C50 60 48 54 48 50Z" fill="#85878d"/>
   <path d="M48 66l5.500-3.500 1 6.500zM55 73.500l6-5 1 8zM44 58l4-3 1 5z" fill="#1c1c20"/>
   <ellipse cx="57.600" cy="54" rx="9" ry="21" fill="#9c9ea4" transform="rotate(6 57.600 54)"/>
   <path d="M60 36L84 32L88 62L68 70L60 60Z" fill="#4a4745"/>
   <path d="M62 38l12-2 1 7-12 3zM60 54l18-5 2 8-17 6z" fill="#7e7872"/>
   <path d="M64 41l10-1.500M62 57l16-4.500M66 48l14-3" stroke="#18181a" stroke-width="1.800"/>
   <path d="M68 52l10-2.500" stroke="#c8c0b4" stroke-width="1.200"/>
   <path d="M77 32L92 29L96 72L85 77Z" fill="#b6b8bc"/>
   <path d="M92 29L113 22L131 15L147 22L146 45L145 64L100 78L96 72Z" fill="#73767c"/>
   <path d="M96 34l8-1 1 30-7 2z" fill="#5a5c62"/>
   <path d="M106 40L132 36L133 62L108 68Z" fill="#1c1c20"/>
   <path d="M112.500 40l4-.8 3 26-4 1zM122.500 38l3.500-.7 3 24-3.500.8z" fill="#d8dadc"/>
   <path d="M113 22L131 15L147 22L146 40L134 36L120 31Z" fill="#888b91"/>
   <path d="M120 24l8-4 8 4-2 6-10-1z" fill="#9a9da3"/>
   <ellipse cx="152" cy="31.500" rx="5" ry="9.500" fill="#c4c6ca"/><ellipse cx="151" cy="31.500" rx="2.500" ry="6" fill="#7a7c80"/>
   <path d="M84 77L145 60L145 64L141 74L104 94L90 92Z" fill="#2a2a2e"/>
   <path d="M86 80.500L142 63.500" stroke="#9a9ca0" stroke-width="1.500"/>
   <path d="M90 86l6-2v5l-6 2zM100 83l5-2v5l-5 2zM110 80l5-2v4l-5 2zM120 76l5-2v4l-5 2z" fill="#55565a"/>
   <path d="M61 110.700L104 94L104 91L62 107Z" fill="#b8b8bc"/>
  </g>
  </g>
 </svg>
<!-- textbox -->
 <div class="abs" style="left:643.200px;top:290px;width:94px;height:26px;background:#4a4848"></div>
 <div class="abs" id="tbt" style="left:648px;top:293.500px;font-size:7.900px;font-weight:bold;color:#f2f2f2;white-space:nowrap;letter-spacing:-0.280px">This is a text box!</div>
<!-- arrow -->
 <svg style="left:495px;top:270px;width:110px;height:110px" viewBox="0 0 540 540"><g fill="none" stroke="#f4700c" stroke-linecap="round" stroke-linejoin="round"><path stroke-width="21" d="M453 68C420 78 395 98 360 122C335 140 315 152 295 175C275 198 255 220 235 240C215 258 195 272 185 295C172 325 150 355 125 395C108 422 92 448 78 468"/><path stroke-width="22" d="M90 402L78 466M100 440L145 428M84 440l30-10"/></g></svg>
<!--CAR-->
 <svg id="car" style="left:310px;top:360px;width:220px;height:90px" viewBox="0 0 960 393">
  <defs>
   <linearGradient id="cb" x1="0" y1="0" x2="0" y2="1"><stop offset="0" stop-color="#35312e"/><stop offset=".5" stop-color="#433c36"/><stop offset=".72" stop-color="#5c4e42"/><stop offset=".9" stop-color="#937c66"/><stop offset="1" stop-color="#ab9178"/></linearGradient>
   <linearGradient id="cr" x1="0" y1="0" x2="0" y2="1"><stop offset="0" stop-color="#5a5149"/><stop offset="1" stop-color="#463d36"/></linearGradient>
   <radialGradient id="wh" cx=".45" cy=".45" r=".6"><stop offset="0" stop-color="#cfc6ba"/><stop offset=".6" stop-color="#b3a796"/><stop offset="1" stop-color="#7c7062"/></radialGradient>
   <linearGradient id="ws" x1="0" y1="0" x2="1" y2="1"><stop offset="0" stop-color="#a3b5ac"/><stop offset="1" stop-color="#6f857c"/></linearGradient>
   <filter id="cbl"><feGaussianBlur stdDeviation="1.600"/></filter>
  </defs>
  <g filter="url(#cbl)">
  <!-- spoiler -->
  <path d="M58 106L205 75L222 82L215 90L70 118Z" fill="#1f1b19"/>
  <path d="M100 110l8 22M190 88l10 18" stroke="#1f1b19" stroke-width="7"/>
  <!-- body -->
  <path d="M42 165Q44 142 70 132L150 112L250 95L300 76Q350 60 420 60Q500 58 562 74L650 130L690 128L790 142L905 172Q930 180 930 198L926 228Q905 248 870 252L790 290L705 304L690 250Q640 225 585 248Q560 262 556 292L300 262L262 262Q255 200 200 190Q160 190 150 232L75 200Q42 185 42 165Z" fill="url(#cb)"/>
  <!-- roof -->
  <path d="M250 96L300 76Q350 60 420 60Q500 58 562 74L470 108L310 100Z" fill="url(#cr)"/>
  <!-- rear deck -->
  <path d="M70 132L150 112L250 96L310 100L330 152L200 140Z" fill="#3a332e"/>
  <!-- side window -->
  <path d="M305 102L460 108L492 166L340 156Z" fill="#2e3a36"/>
  <path d="M305 102L345 104L335 150L318 148Z" fill="#3a4844"/>
  <path d="M348 104l-12 50" stroke="#5a5048" stroke-width="5"/>
  <path d="M300 99L462 105L498 168" stroke="#7a6c5e" stroke-width="4" fill="none"/>
  <!-- windshield -->
  <path d="M462 108L562 76L650 130L545 160L500 168Z" fill="url(#ws)"/>
  <path d="M548 84l18 72" stroke="#b9c8c0" stroke-width="3" opacity=".6"/>
  <!-- hood black -->
  <path d="M545 162L650 130L690 128L790 142L905 172L928 186L865 200L800 222L700 195L600 178Z" fill="#1d1917"/>
  <path d="M625 150Q640 130 690 128L780 140Q790 150 760 160L690 170Z" fill="#2b1f1c"/>
  <!-- front face -->
  <path d="M770 240L860 205L926 186L930 198L926 228L870 250L778 285Z" fill="#5a5148"/>
  <path d="M778 244L856 214L858 246L782 274Z" fill="#2a2623"/>
  <path d="M866 210L920 194L920 222L868 242Z" fill="#2a2623"/>
  <path d="M770 240L860 205L926 186" stroke="#c8bcae" stroke-width="4" fill="none"/>
  <path d="M778 285L870 250L926 228" stroke="#b8ac9e" stroke-width="5" fill="none"/>
  <circle cx="785" cy="255" r="9" fill="#e8e4dc"/><circle cx="800" cy="250" r="8" fill="#d8d4cc"/>
  <circle cx="893" cy="216" r="8" fill="#e8e4dc"/><circle cx="908" cy="211" r="7" fill="#d8d4cc"/>
  <path d="M775 292L870 258L880 266L800 298Z" fill="#3a332e"/>
  <!-- door line -->
  <path d="M318 185Q322 240 335 262M515 215Q518 260 520 288" stroke="#3a322c" stroke-width="3" fill="none" opacity=".8"/>
  <rect x="334" y="178" width="22" height="8" fill="#cfc6ba"/>
  <rect x="700" y="243" width="16" height="12" fill="#b8ac9e"/>
  <!-- wheels -->
  <ellipse cx="204" cy="246" rx="55" ry="58" fill="#26211e"/>
  <ellipse cx="199" cy="249" rx="41" ry="47" fill="url(#wh)"/>
  <ellipse cx="199" cy="249" rx="13" ry="15" fill="#8c8072"/>
  <path d="M199 204v90M162 234l74 32M162 266l74-36" stroke="#8a7e70" stroke-width="6" opacity=".7"/>
  <ellipse cx="621" cy="298" rx="60" ry="61" fill="#26211e"/>
  <ellipse cx="614" cy="302" rx="45" ry="51" fill="url(#wh)"/>
  <ellipse cx="614" cy="302" rx="14" ry="16" fill="#8c8072"/>
  <path d="M614 253v98M573 284l82 36M573 320l82-38" stroke="#8a7e70" stroke-width="6" opacity=".7"/>
  </g>
 </svg>
<!--PANEL-->
 <div class="abs" style="left:752px;top:507px;width:215px;height:40px;background:rgba(80,86,104,.17);filter:blur(2px)"></div>
 <div class="tb" id="fmttb" style="left:763px;top:209px;width:160px;height:32px">
  <svg style="left:9.500px;top:9.500px;width:13px;height:13px" viewBox="0 0 24 24"><path class="d" d="M15.600 10.790c.970-.670 1.650-1.770 1.650-2.790 0-2.260-1.750-4-4-4H7v14h7.040c2.090 0 3.710-1.700 3.710-3.790 0-1.520-.860-2.820-2.150-3.420zM10 6.500h3c.830 0 1.500.670 1.500 1.500s-.670 1.500-1.500 1.500h-3v-3zm3.500 9H10v-3h3.500c.830 0 1.500.670 1.500 1.500s-.670 1.500-1.500 1.500z"/></svg>
  <svg style="left:42px;top:10px;width:12px;height:12px" viewBox="0 0 24 24"><path class="d" d="M10 4v3h2.210l-3.420 8H6v3h8v-3h-2.210l3.420-8H18V4z"/></svg>
  <svg style="left:74px;top:10px;width:12px;height:12px" viewBox="0 0 24 24"><path class="d" d="M12 17c3.310 0 6-2.690 6-6V3h-2.500v8c0 1.930-1.570 3.500-3.500 3.500S8.500 12.930 8.500 11V3H6v8c0 3.310 2.690 6 6 6zm-7 2v2h14v-2H5z"/></svg>
  <svg style="left:105.500px;top:9px;width:13px;height:13px;transform:rotate(-45deg)" viewBox="0 0 24 24"><g fill="none" stroke="#2e2e2e" stroke-width="2.600"><rect x="2.500" y="8" width="11" height="8" rx="4"/><rect x="10.500" y="8" width="11" height="8" rx="4"/></g></svg>
  <svg style="left:138px;top:10px;width:12px;height:12px" viewBox="0 0 24 24"><path fill="#8a8a8a" stroke="#444" stroke-width="2.400" d="M4.500 2.500h15v19h-15z"/><circle cx="12.500" cy="9" r="3.400" fill="#444"/><path d="M4 2v20" stroke="#444" stroke-width="3"/></svg>
 </div>
 <div class="abs" id="nb" style="left:763px;top:245.500px;width:188.500px;height:286px;background:#fff;border-radius:8px;box-shadow:0 1px 3px rgba(60,70,90,.35),0 3px 5px rgba(40,45,60,.35)">
  <div class="abs" id="nbt" style="left:9px;top:8.500px;font-size:7.500px;font-weight:bold;color:#3e8ed0;white-space:nowrap">Notebook Builder</div>
  <svg style="left:168.500px;top:10.500px;width:9px;height:3px" viewBox="0 0 18 6"><circle cx="3" cy="3" r="2.200" fill="#333"/><circle cx="9" cy="3" r="2.200" fill="#333"/><circle cx="15" cy="3" r="2.200" fill="#333"/></svg>
  <div class="abs lbl" id="l1" style="left:7.500px;top:29px">Text</div>
  <div class="abs" style="left:6.500px;top:40.500px;width:159.500px;height:19px;background:#efefef;border:1px solid #9cc3e8;box-shadow:0 0 2px rgba(120,170,230,.8)"></div>
  <div class="abs" id="ph" style="left:12.500px;top:46px;font-size:7.800px;color:#5c5c5c;white-space:nowrap">Enter text and questions here</div>
  <div class="abs" style="left:113.500px;top:45.500px;width:1px;height:10px;background:#222"></div>
  <!-- cursor -->
  <svg style="left:36px;top:46px;width:7px;height:10px" viewBox="0 0 14 20"><path d="M1 1v15l4-3.500 3 6.500 2.500-1-3-6.500H13z" fill="#1a1a1a" stroke="#ddd" stroke-width="1"/></svg>
  <div class="abs lbl" id="l2" style="left:7.500px;top:68px;letter-spacing:-0.300px">Answer Type</div>
  <!-- chat -->
  <svg style="left:27px;top:91px;width:13.500px;height:13.500px" viewBox="0 0 24 24"><path fill="none" stroke="#222" stroke-width="2.200" stroke-linejoin="round" d="M3 3h18v14H9l-3.500 4v-4H3z"/><path stroke="#222" stroke-width="2" d="M7 8h10M7 12h7"/></svg>
  <svg style="left:80.500px;top:90px;width:15px;height:15px" viewBox="0 0 24 24"><circle cx="12" cy="12.500" r="3.200" fill="none" stroke="#1c1c1c" stroke-width="0"/><path fill="#1c1c1c" fill-rule="evenodd" d="M9 2L7.170 4H4c-1.100 0-2 .900-2 2v12c0 1.100.900 2 2 2h16c1.100 0 2-.900 2-2V6c0-1.100-.900-2-2-2h-3.170L15 2H9zm3 15c-2.760 0-5-2.240-5-5s2.240-5 5-5 5 2.240 5 5-2.240 5-5 5zm0-2a3 3 0 100-6 3 3 0 000 6z"/></svg>
  <svg style="left:136px;top:90.500px;width:14.500px;height:14.500px" viewBox="0 0 24 24"><path fill="#1c1c1c" d="M2 3.500h4v4H2zM2 10h4v4H2zM2 16.500h4v4H2zM8.500 4h13.500v3H8.500zM8.500 10.500h13.500v3H8.500zM8.500 17h13.500v3H8.500z"/></svg>
  <div class="abs sm" style="left:3.500px;width:60px;top:116.500px">with text</div>
  <div class="abs sm" style="left:58px;width:60px;top:116.500px">with image</div>
  <div class="abs sm" style="left:113px;width:60px;top:116.500px">multiple<br>choice</div>
  <div class="abs lbl" id="l3" style="left:7.500px;top:148px">Hints</div>
  <svg style="left:9.500px;top:163.500px;width:10px;height:10px" viewBox="0 0 20 20"><path d="M10 1v18M1 10h18" stroke="#222" stroke-width="2.600"/></svg>
  <div class="abs" id="ah" style="left:26px;top:164.500px;font-size:7.200px;font-weight:bold;color:#2e2e2e;white-space:nowrap">Add Hint</div>
  <div class="abs" id="cnt" style="left:156px;top:165px;font-size:7px;font-weight:bold;color:#3a3a3a;white-space:nowrap">0/3</div>
  <div class="abs" id="cancel" style="left:18.500px;width:60px;top:259px;text-align:center;font-size:7.300px;font-weight:bold;color:#2e2e2e">Cancel</div>
  <div class="abs" id="okay" style="left:96px;top:247px;width:85.500px;height:32px;background:#00a7e0;border-radius:3px;color:#e9f8ff;font-size:7.500px;font-weight:bold;text-align:center;line-height:33px">Okay</div>
 </div>
</div></div>
</body></html>
